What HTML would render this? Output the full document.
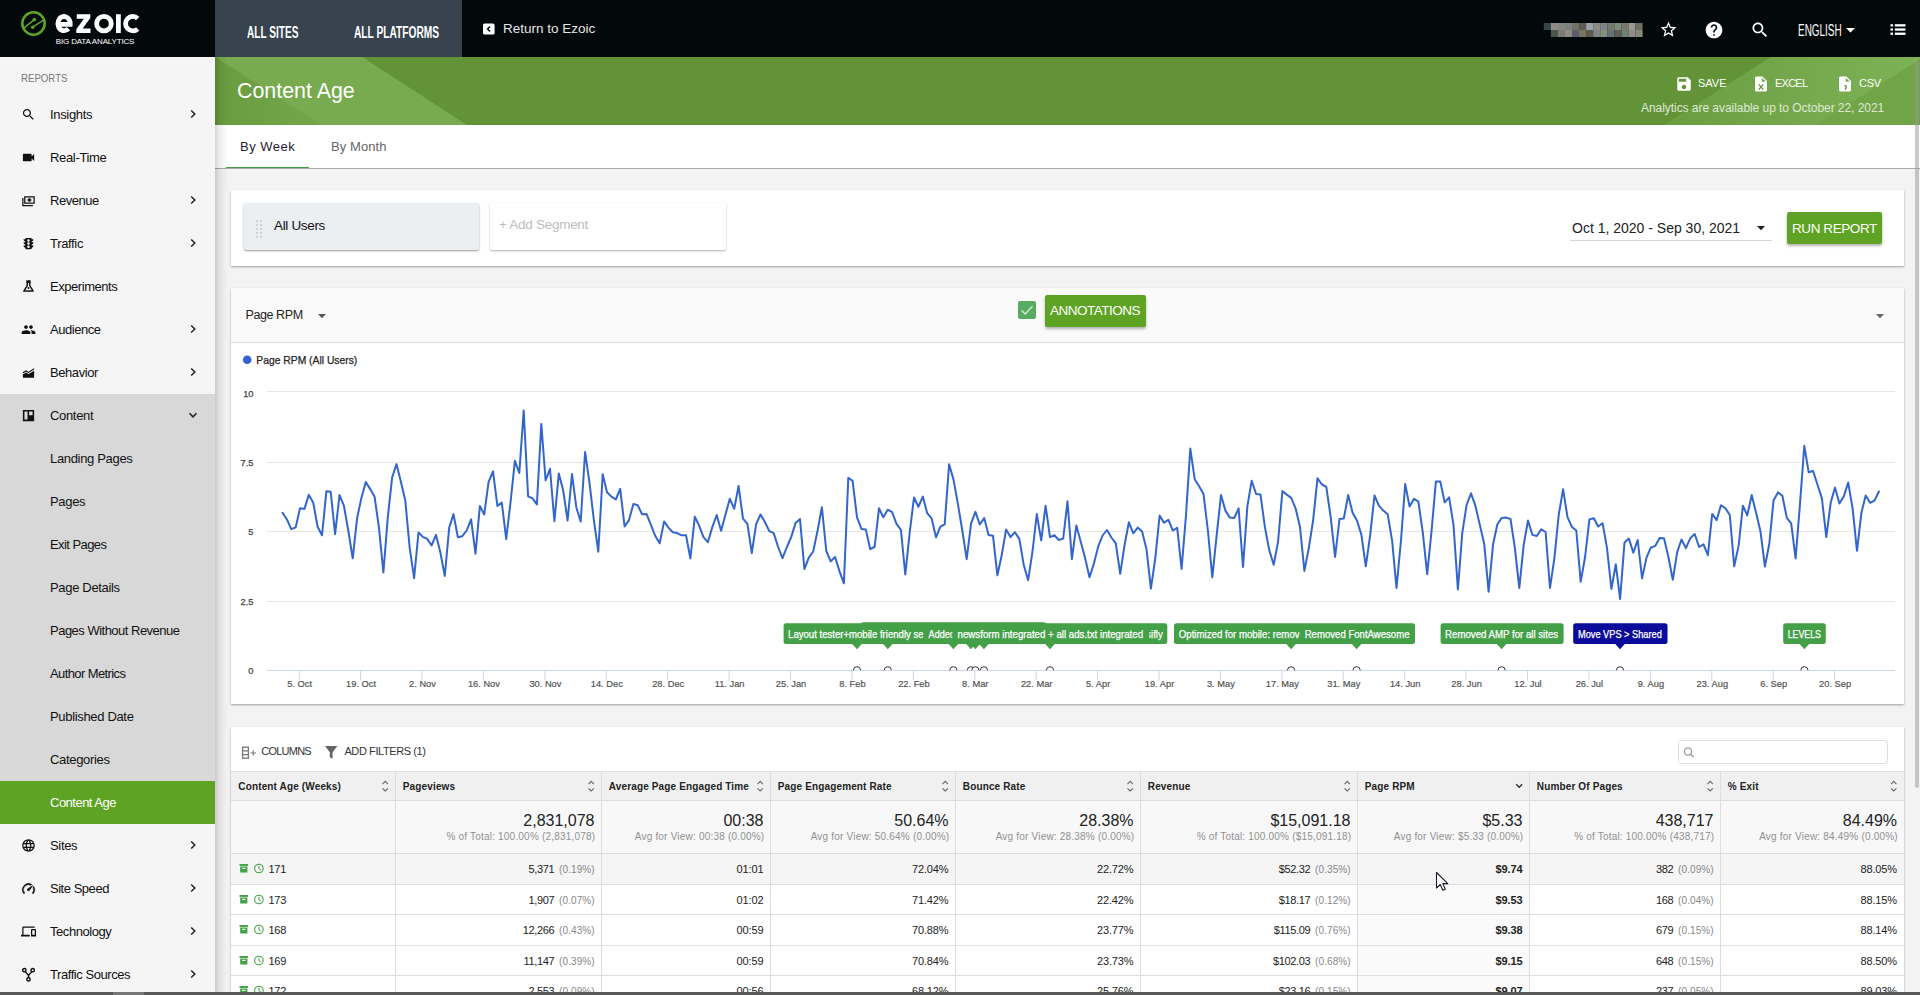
<!DOCTYPE html>
<html>
<head>
<meta charset="utf-8">
<title>Content Age</title>
<style>
*{box-sizing:border-box;margin:0;padding:0}
html,body{width:1920px;height:995px;overflow:hidden;background:#f3f3f3;font-family:"Liberation Sans",sans-serif;color:#222}
.abs{position:absolute}
#topbar{position:absolute;left:0;top:0;width:1920px;height:57px;background:#03080b}
#navtabs{position:absolute;left:215px;top:0;width:247px;height:57px;background:#37444f}
.cond{position:absolute;color:#fff;font-weight:bold;font-size:17px;white-space:nowrap;transform-origin:0 0;line-height:20px}
#sidebar{position:absolute;left:0;top:57px;width:215px;height:938px;background:#f5f5f5}
#sideshadow{position:absolute;left:215px;top:57px;width:14px;height:938px;background:linear-gradient(to right,rgba(0,0,0,.16),rgba(0,0,0,.07) 35%,rgba(0,0,0,.02) 70%,rgba(0,0,0,0))}
.sb{position:absolute;left:0;width:215px;height:43px}
.sb span{position:absolute;left:50px;top:13px;font-size:13px;line-height:17px;color:#111;white-space:nowrap;letter-spacing:-0.33px}
.sb svg.ic{position:absolute;left:21px;top:14px;width:15px;height:15px}
.sb svg.ch{position:absolute;left:188px;top:16px;width:10px;height:10px}
#greenhdr{position:absolute;left:215px;top:57px;width:1705px;height:68px;background:#629437;overflow:hidden}
#tabsbar{position:absolute;left:215px;top:125px;width:1705px;height:44px;background:#fff;border-bottom:1px solid #aaa}
.panel{position:absolute;background:#fff;box-shadow:0 1px 2px rgba(0,0,0,.35)}
.hb{top:19px;font-size:11px;line-height:15px;color:#fff;white-space:nowrap}
</style>
</head>
<body>
<div id="topbar">
<svg class="abs" style="left:0;top:0" width="215" height="57" viewBox="0 0 215 57"><circle cx="33.5" cy="23.5" r="11.2" fill="none" stroke="#5ba525" stroke-width="2.6"/><path d="M24 27.800L34.300 19.600M32.700 27.200L43 20.400" stroke="#5ba525" stroke-width="1.500" fill="none" stroke-linecap="round"/><circle cx="34.300" cy="19.600" r="1.800" fill="#5ba525"/><circle cx="32.700" cy="27.200" r="1.800" fill="#5ba525"/>
<g fill="none" stroke="#fff" stroke-width="4.800"><path d="M59.500 24.300H70.170A6.150 7.100 0 1 0 68.400 28.620"/><circle cx="103.950" cy="23.650" r="7.300"/><path d="M137.700 18.400A7.200 7.200 0 1 0 137.700 28.900"/></g>
<path fill="#fff" d="M76.800 14.300H90.300V18L82.700 28.500H90.500V33H76.300V29.300L83.900 18.800H76.800ZM116 14.300h4.800V33H116z"/></svg>
<div class="abs" id="bda" style="left:55.8px;top:37px;font-size:8px;line-height:10px;color:#fff;white-space:nowrap;letter-spacing:-0.16px">BIG DATA ANALYTICS</div>
</div>
<div id="navtabs"></div>
<div class="cond" id="allsites" style="left:247px;top:23px;font-size:16px;transform:scaleX(.632)">ALL SITES</div>
<div class="cond" id="allplat" style="left:354px;top:23px;font-size:16px;transform:scaleX(.637)">ALL PLATFORMS</div>
<svg class="abs" style="left:483px;top:23px" width="12" height="12" viewBox="0 0 12 12"><rect x="0" y="0.5" width="11.6" height="11" rx="1.6" fill="#fff"/><path d="M7 3.5 L4.6 6 L7 8.5" stroke="#03080b" stroke-width="1.5" fill="none"/></svg>
<div class="abs" id="ret" style="left:503px;top:20px;font-size:13.5px;line-height:17px;color:#e4e4e4;white-space:nowrap">Return to Ezoic</div>
<svg class="abs" style="left:1543px;top:23px" width="100" height="14" viewBox="0 0 100 14"><rect x="0.80" y="0" width="7.150" height="7" fill="#34464a"/><rect x="7.85" y="0" width="7.150" height="7" fill="#8f8c86"/><rect x="7.85" y="7" width="7.150" height="7" fill="#4d5650"/><rect x="14.90" y="0" width="7.150" height="7" fill="#828580"/><rect x="14.90" y="7" width="7.150" height="7" fill="#7d7a74"/><rect x="21.95" y="0" width="7.150" height="7" fill="#7a8280"/><rect x="21.95" y="7" width="7.150" height="7" fill="#8a8d88"/><rect x="29.00" y="0" width="7.150" height="7" fill="#6f7268"/><rect x="29.00" y="7" width="7.150" height="7" fill="#5d5e6c"/><rect x="36.05" y="0" width="7.150" height="7" fill="#5d5a52"/><rect x="36.05" y="7" width="7.150" height="7" fill="#76785f"/><rect x="43.10" y="0" width="7.150" height="7" fill="#98a4a8"/><rect x="43.10" y="7" width="7.150" height="7" fill="#5d5a52"/><rect x="50.15" y="0" width="7.150" height="7" fill="#8a8d84"/><rect x="50.15" y="7" width="7.150" height="7" fill="#7f8688"/><rect x="57.20" y="0" width="7.150" height="7" fill="#7d8484"/><rect x="57.20" y="7" width="7.150" height="7" fill="#84907f"/><rect x="64.25" y="0" width="7.150" height="7" fill="#74766c"/><rect x="64.25" y="7" width="7.150" height="7" fill="#66727a"/><rect x="71.30" y="0" width="7.150" height="7" fill="#7d8a7c"/><rect x="71.30" y="7" width="7.150" height="7" fill="#5f5d55"/><rect x="78.35" y="0" width="7.150" height="7" fill="#77786e"/><rect x="78.35" y="7" width="7.150" height="7" fill="#6d8270"/><rect x="85.40" y="0" width="7.150" height="7" fill="#9a9890"/><rect x="85.40" y="7" width="7.150" height="7" fill="#8e8e88"/><rect x="92.45" y="0" width="7.150" height="7" fill="#6e6e64"/><rect x="92.45" y="7" width="7.150" height="7" fill="#8a877a"/></svg>
<svg class="abs" style="left:1659px;top:20px" width="19" height="19" viewBox="0 0 24 24"><path fill="#fff" d="M22 9.24l-7.19-.62L12 2 9.19 8.630 2 9.240l5.460 4.730L5.820 21 12 17.270 18.180 21l-1.630-7.030L22 9.240zM12 15.400l-3.760 2.270 1-4.280-3.320-2.880 4.380-.38L12 6.100l1.710 4.040 4.380.38-3.320 2.880 1 4.280L12 15.400z"/></svg>
<svg class="abs" style="left:1704px;top:20px" width="20" height="20" viewBox="0 0 24 24"><path fill="#fff" d="M12 2C6.480 2 2 6.480 2 12s4.480 10 10 10 10-4.480 10-10S17.520 2 12 2zm1 17h-2v-2h2v2zm2.070-7.750l-.9.920C13.450 12.900 13 13.500 13 15h-2v-.5c0-1.100.45-2.100 1.170-2.830l1.240-1.260c.37-.36.59-.86.590-1.410 0-1.100-.9-2-2-2s-2 .9-2 2H8c0-2.210 1.790-4 4-4s4 1.790 4 4c0 .88-.36 1.680-.93 2.250z"/></svg>
<svg class="abs" style="left:1750px;top:20px" width="20" height="20" viewBox="0 0 24 24"><path fill="#fff" d="M15.500 14h-.79l-.28-.27C15.410 12.590 16 11.110 16 9.500 16 5.910 13.090 3 9.500 3S3 5.910 3 9.500 5.910 16 9.500 16c1.610 0 3.090-.59 4.230-1.570l.27.28v.79l5 4.990L20.490 19l-4.990-5zm-6 0C7.010 14 5 11.990 5 9.500S7.010 5 9.500 5 14 7.010 14 9.500 11.990 14 9.500 14z"/></svg>
<div class="cond" id="eng" style="left:1797.500px;top:20.500px;font-weight:normal;font-size:16px;transform:scaleX(.622)">ENGLISH</div>
<svg class="abs" style="left:1846px;top:28px" width="9" height="5" viewBox="0 0 9 5"><path d="M0 0h9L4.500 4.500z" fill="#fff"/></svg>
<svg class="abs" style="left:1888px;top:22px" width="20" height="16" viewBox="1888 22 20 16"><g fill="#fff"><rect x="1890.500" y="24.200" width="2.500" height="2.300"/><rect x="1894.800" y="24.200" width="10.700" height="2.300"/><rect x="1890.500" y="28.400" width="2.500" height="2.300"/><rect x="1894.800" y="28.400" width="10.700" height="2.300"/><rect x="1890.500" y="32.600" width="2.500" height="2.300"/><rect x="1894.800" y="32.600" width="10.700" height="2.300"/></g></svg>
<div id="sidebar">
<div class="abs" id="reports" style="left:21px;top:14px;font-size:11px;line-height:14px;color:#777;white-space:nowrap;transform:scaleX(.877);transform-origin:0 0">REPORTS</div>
<div class="abs" style="left:0;top:337px;width:215px;height:387px;background:#d8d8d8"></div>
<div class="abs" style="left:0;top:724px;width:215px;height:43px;background:#5ea323"></div>
<div class="sb" style="top:36px"><svg class="ic" viewBox="0 0 24 24" fill="#111"><path d="M15.500 14h-.79l-.28-.27C15.410 12.590 16 11.110 16 9.500 16 5.910 13.090 3 9.500 3S3 5.910 3 9.500 5.910 16 9.500 16c1.610 0 3.090-.59 4.230-1.570l.27.28v.79l5 4.990L20.490 19l-4.990-5zm-6 0C7.010 14 5 11.990 5 9.500S7.010 5 9.500 5 14 7.010 14 9.500 11.990 14 9.500 14z"/></svg><span>Insights</span><svg class="ch" viewBox="0 0 10 10"><path d="M3.200 1.500L6.800 5 3.200 8.500" fill="none" stroke="#222" stroke-width="1.500"/></svg></div>
<div class="sb" style="top:79px"><svg class="ic" viewBox="0 0 24 24" fill="#111"><path d="M17 10.500V7c0-.55-.45-1-1-1H4c-.55 0-1 .45-1 1v10c0 .55.45 1 1 1h12c.55 0 1-.45 1-1v-3.500l4 4v-11l-4 4z"/></svg><span>Real-Time</span></div>
<div class="sb" style="top:122px"><svg class="ic" viewBox="0 0 24 24" fill="#111"><path d="M5 5h17v12H5z M7 7v8h13V7z" fill-rule="evenodd"/><ellipse cx="13.500" cy="11" rx="3.200" ry="2.800"/><path d="M2 8h2v11h15v2H2z"/></svg><span style="letter-spacing:-0.48px">Revenue</span><svg class="ch" viewBox="0 0 10 10"><path d="M3.200 1.500L6.800 5 3.200 8.500" fill="none" stroke="#222" stroke-width="1.500"/></svg></div>
<div class="sb" style="top:165px"><svg class="ic" viewBox="0 0 24 24" fill="#111"><path d="M20 10h-3V8.860c1.720-.45 3-2 3-3.860h-3V4c0-.55-.45-1-1-1H8c-.55 0-1 .45-1 1v1H4c0 1.860 1.280 3.410 3 3.860V10H4c0 1.860 1.280 3.410 3 3.860V15H4c0 1.860 1.280 3.410 3 3.860V20c0 .55.45 1 1 1h8c.55 0 1-.45 1-1v-1.140c1.720-.45 3-2 3-3.860h-3v-1.140c1.720-.45 3-2 3-3.860zm-8 9c-1.110 0-2-.9-2-2s.89-2 2-2c1.100 0 2 .9 2 2s-.89 2-2 2zm0-5c-1.110 0-2-.9-2-2s.89-2 2-2c1.100 0 2 .9 2 2s-.89 2-2 2zm0-5c-1.110 0-2-.9-2-2 0-1.110.89-2 2-2 1.100 0 2 .89 2 2 0 1.100-.89 2-2 2z"/></svg><span>Traffic</span><svg class="ch" viewBox="0 0 10 10"><path d="M3.200 1.500L6.800 5 3.200 8.500" fill="none" stroke="#222" stroke-width="1.500"/></svg></div>
<div class="sb" style="top:208px"><svg class="ic" viewBox="0 0 24 24" fill="#111"><path d="M8.500 2h7v4.500h-7z"/><path d="M10 6v4.500L4.500 19.300h15L14 10.500V6" fill="none" stroke="#111" stroke-width="2.300" stroke-linejoin="round"/><circle cx="12" cy="14.500" r="1.600"/></svg><span style="letter-spacing:-0.45px">Experiments</span></div>
<div class="sb" style="top:251px"><svg class="ic" viewBox="0 0 24 24" fill="#111"><path d="M16 11c1.660 0 2.990-1.340 2.990-3S17.660 5 16 5c-1.660 0-3 1.340-3 3s1.340 3 3 3zm-8 0c1.660 0 2.990-1.340 2.990-3S9.660 5 8 5C6.340 5 5 6.340 5 8s1.340 3 3 3zm0 2c-2.330 0-7 1.170-7 3.500V19h14v-2.500c0-2.330-4.670-3.500-7-3.500zm8 0c-.29 0-.62.020-.97.050 1.160.84 1.970 1.970 1.970 3.450V19h6v-2.500c0-2.330-4.670-3.500-7-3.500z"/></svg><span style="letter-spacing:-0.47px">Audience</span><svg class="ch" viewBox="0 0 10 10"><path d="M3.200 1.500L6.800 5 3.200 8.500" fill="none" stroke="#222" stroke-width="1.500"/></svg></div>
<div class="sb" style="top:294px"><svg class="ic" viewBox="0 0 24 24" fill="#111"><path d="M3 20.500V15l5-3 4 2.500 9-5.500V20.500z"/><path d="M3 12.500l5-3 4 2.300 9-5.800" fill="none" stroke="#111" stroke-width="1.700"/></svg><span style="letter-spacing:-0.42px">Behavior</span><svg class="ch" viewBox="0 0 10 10"><path d="M3.200 1.500L6.800 5 3.200 8.500" fill="none" stroke="#222" stroke-width="1.500"/></svg></div>
<div class="sb" style="top:337px"><svg class="ic" viewBox="0 0 24 24" fill="#111"><path d="M3 3h18v18H3z M5.500 5.500v13h5v-13z M13 5.500v6h5.500v-6z" fill-rule="evenodd"/></svg><span>Content</span><svg class="ch" viewBox="0 0 10 10"><path d="M1.500 3.200L5 6.800 8.500 3.200" fill="none" stroke="#222" stroke-width="1.500"/></svg></div>
<div class="sb" style="top:380px"><span>Landing Pages</span></div>
<div class="sb" style="top:423px"><span>Pages</span></div>
<div class="sb" style="top:466px"><span style="letter-spacing:-0.57px">Exit Pages</span></div>
<div class="sb" style="top:509px"><span>Page Details</span></div>
<div class="sb" style="top:552px"><span style="letter-spacing:-0.51px">Pages Without Revenue</span></div>
<div class="sb" style="top:595px"><span style="letter-spacing:-0.60px">Author Metrics</span></div>
<div class="sb" style="top:638px"><span>Published Date</span></div>
<div class="sb" style="top:681px"><span>Categories</span></div>
<div class="sb" style="top:724px"><span style="color:#fff;letter-spacing:-0.51px">Content Age</span></div>
<div class="sb" style="top:767px"><svg class="ic" viewBox="0 0 24 24" fill="#111"><path d="M11.990 2C6.470 2 2 6.480 2 12s4.470 10 9.990 10C17.520 22 22 17.520 22 12S17.520 2 11.990 2zm6.930 6h-2.950c-.32-1.250-.78-2.450-1.380-3.560 1.840.63 3.370 1.910 4.330 3.560zM12 4.040c.83 1.200 1.480 2.530 1.910 3.960h-3.820c.43-1.430 1.080-2.760 1.910-3.960zM4.260 14C4.100 13.360 4 12.690 4 12s.1-1.360.26-2h3.380c-.08.66-.14 1.320-.14 2 0 .68.060 1.340.14 2H4.260zm.82 2h2.950c.32 1.250.78 2.450 1.380 3.560-1.840-.63-3.370-1.900-4.330-3.560zm2.950-8H5.080c.96-1.660 2.490-2.930 4.330-3.560C8.810 5.550 8.350 6.750 8.030 8zM12 19.960c-.83-1.200-1.480-2.530-1.910-3.960h3.820c-.43 1.430-1.080 2.760-1.910 3.960zM14.340 14H9.660c-.09-.66-.16-1.320-.16-2 0-.68.070-1.350.16-2h4.680c.09.65.16 1.320.16 2 0 .68-.07 1.340-.16 2zm.25 5.560c.6-1.110 1.060-2.310 1.380-3.560h2.950c-.96 1.650-2.490 2.930-4.330 3.560zM16.360 14c.08-.66.14-1.320.14-2 0-.68-.06-1.340-.14-2h3.380c.16.64.26 1.310.26 2s-.1 1.360-.26 2h-3.380z"/></svg><span>Sites</span><svg class="ch" viewBox="0 0 10 10"><path d="M3.200 1.500L6.800 5 3.200 8.500" fill="none" stroke="#222" stroke-width="1.500"/></svg></div>
<div class="sb" style="top:810px"><svg class="ic" viewBox="0 0 24 24" fill="#111" stroke="#111" stroke-width="0.700"><path d="M20.380 8.570l-1.230 1.850a8 8 0 0 1-.22 7.580H5.070A8 8 0 0 1 15.580 6.850l1.850-1.230A10 10 0 0 0 3.350 19a2 2 0 0 0 1.720 1h13.850a2 2 0 0 0 1.740-1 10 10 0 0 0-.27-10.440zm-9.790 6.840a2 2 0 0 0 2.830 0l5.660-8.490-8.490 5.660a2 2 0 0 0 0 2.830z"/><path d="M6.500 16.500h11v4.500h-11z" fill="#f5f5f5" stroke="#f5f5f5"/></svg><span style="letter-spacing:-0.47px">Site Speed</span><svg class="ch" viewBox="0 0 10 10"><path d="M3.200 1.500L6.800 5 3.200 8.500" fill="none" stroke="#222" stroke-width="1.500"/></svg></div>
<div class="sb" style="top:853px"><svg class="ic" viewBox="0 0 24 24" fill="#111"><path d="M4 6h18V4H4c-1.100 0-2 .9-2 2v11H0v3h14v-3H4V6zm19 2h-6c-.55 0-1 .45-1 1v10c0 .55.45 1 1 1h6c.55 0 1-.45 1-1V9c0-.55-.45-1-1-1zm-1 9h-4v-7h4v7z"/></svg><span style="letter-spacing:-0.45px">Technology</span><svg class="ch" viewBox="0 0 10 10"><path d="M3.200 1.500L6.800 5 3.200 8.500" fill="none" stroke="#222" stroke-width="1.500"/></svg></div>
<div class="sb" style="top:896px"><svg class="ic" viewBox="0 0 24 24" fill="#111"><g fill="none" stroke="#111" stroke-width="2.300"><circle cx="5.300" cy="5" r="2.700"/><circle cx="18.700" cy="5" r="2.700"/><circle cx="12" cy="19.800" r="2.700"/><path d="M6.800 7.400L12 13.500l5.200-6.100M12 13.500v3.600"/></g></svg><span style="letter-spacing:-0.44px">Traffic Sources</span><svg class="ch" viewBox="0 0 10 10"><path d="M3.200 1.500L6.800 5 3.200 8.500" fill="none" stroke="#222" stroke-width="1.500"/></svg></div>
</div>
<div id="greenhdr">
<svg class="abs" style="left:0;top:0" width="1705" height="68" viewBox="0 0 1705 68"><defs><linearGradient id="lg1" gradientUnits="userSpaceOnUse" x1="1448" y1="0" x2="1705" y2="0"><stop offset="0" stop-color="#6a9d40"/><stop offset="1" stop-color="#7eb256"/></linearGradient><linearGradient id="lg2" gradientUnits="userSpaceOnUse" x1="0" y1="0" x2="110" y2="0"><stop offset="0" stop-color="#699b3f"/><stop offset="1" stop-color="#74a64a"/></linearGradient></defs>
<path d="M0 0H147L252 68H0Z" fill="#78ab4f"/><path d="M0 0L107 68H0Z" fill="url(#lg2)"/>
<path d="M1556 0H1705V68H1449Z" fill="url(#lg1)"/><path d="M1707 1V68H1601Z" fill="#70a446"/></svg>
<div class="abs" id="ttl" style="left:22px;top:21.300px;font-size:21.4px;line-height:26px;color:#fff;white-space:nowrap">Content Age</div>
<svg class="abs" style="left:1460px;top:18px" width="18" height="18" viewBox="0 0 24 24"><path fill="#fff" d="M17 3H5c-1.110 0-2 .9-2 2v14c0 1.100.89 2 2 2h14c1.100 0 2-.9 2-2V7l-4-4zm-5 16c-1.660 0-3-1.340-3-3s1.340-3 3-3 3 1.340 3 3-1.340 3-3 3zm3-10H5V5h10v4z"/></svg>
<div class="abs hb" id="hsave" style="left:1483px">SAVE</div>
<svg class="abs" style="left:1537px;top:18px" width="18" height="18" viewBox="0 0 24 24"><path fill="#fff" d="M14 2H6c-1.100 0-2 .9-2 2v16c0 1.100.9 2 2 2h12c1.100 0 2-.9 2-2V8l-6-6zm-1 7V3.500L18.500 9H13z"/><path d="M9 12.500l6 7M15 12.500l-6 7" stroke="#629437" stroke-width="1.800"/></svg>
<div class="abs hb" id="hexcel" style="left:1560px;letter-spacing:-0.75px">EXCEL</div>
<svg class="abs" style="left:1621px;top:18px" width="18" height="18" viewBox="0 0 24 24"><path fill="#fff" d="M14 2H6c-1.100 0-2 .9-2 2v16c0 1.100.9 2 2 2h12c1.100 0 2-.9 2-2V8l-6-6zm-1 7V3.500L18.500 9H13z"/><path d="M11 14.500h2.500v2.500l-1.500 2.500" stroke="#629437" stroke-width="1.800" fill="none"/></svg>
<div class="abs hb" id="hcsv" style="left:1644px;letter-spacing:-0.3px">CSV</div>
<div class="abs" id="avail" style="left:1426px;top:44px;font-size:12px;line-height:15px;color:#dfe9d5;white-space:nowrap;letter-spacing:-0.05px">Analytics are available up to October 22, 2021</div>
</div>
<div id="tabsbar">
<div class="abs" id="byweek" style="left:25px;top:13px;font-size:13px;line-height:17px;color:#223;white-space:nowrap;letter-spacing:.5px">By Week</div>
<div class="abs" id="bymonth" style="left:116px;top:13px;font-size:13px;line-height:17px;color:#666;white-space:nowrap;letter-spacing:.08px">By Month</div>
<div class="abs" style="left:11px;top:41.500px;width:83px;height:1.500px;background:#43a047"></div>
</div>
<div class="panel" id="segpanel" style="left:231px;top:190px;width:1673px;height:76px">
<div class="abs" style="left:12.700px;top:13px;width:235.500px;height:47px;background:#eceff2;box-shadow:0 1px 2px rgba(0,0,0,.4);border-radius:2px"></div>
<svg class="abs" style="left:24px;top:29px" width="10" height="20" viewBox="255 219 10 20"><g fill="#c6c9cd"><rect x="256.2" y="220.2" width="1.800" height="1.800"/><rect x="260.2" y="220.2" width="1.800" height="1.800"/><rect x="256.2" y="224.1" width="1.800" height="1.800"/><rect x="260.2" y="224.1" width="1.800" height="1.800"/><rect x="256.2" y="228.0" width="1.800" height="1.800"/><rect x="260.2" y="228.0" width="1.800" height="1.800"/><rect x="256.2" y="231.9" width="1.800" height="1.800"/><rect x="260.2" y="231.9" width="1.800" height="1.800"/><rect x="256.2" y="235.8" width="1.800" height="1.800"/><rect x="260.2" y="235.8" width="1.800" height="1.800"/></g></svg>
<div class="abs" id="allusers" style="left:43px;top:27px;font-size:13.5px;line-height:17px;color:#111;white-space:nowrap;letter-spacing:-0.34px">All Users</div>
<div class="abs" style="left:259px;top:13px;width:236px;height:47px;background:#fff;box-shadow:0 1px 2px rgba(0,0,0,.3);border-radius:2px"></div>
<div class="abs" id="addseg" style="left:268px;top:26px;font-size:13.5px;line-height:17px;color:#bdbdbd;white-space:nowrap;letter-spacing:-0.28px">+ Add Segment</div>
<div class="abs" id="datetxt" style="left:1341px;top:30px;font-size:14px;line-height:17px;color:#222;white-space:nowrap">Oct 1, 2020 - Sep 30, 2021</div>
<svg class="abs" style="left:1526px;top:36px" width="8" height="5" viewBox="0 0 8 5"><path d="M0 0h8L4 4.300z" fill="#222"/></svg>
<div class="abs" style="left:1339px;top:50px;width:202px;height:1px;background:#d8d8d8"></div>
<div class="abs" style="left:1555.5px;top:21.5px;width:95.500px;height:32px;background:#5ea323;border-radius:2px;box-shadow:0 2px 3px rgba(0,0,0,.3)"></div>
<div class="abs" id="runrep" style="left:1561px;top:29.500px;font-size:13.500px;line-height:17px;color:#fff;white-space:nowrap;letter-spacing:-0.42px">RUN REPORT</div>
</div>
<div class="panel" id="chartpanel" style="left:231px;top:288px;width:1673px;height:416px">
<div class="abs" style="left:0;top:0;width:1673px;height:55px;background:#fafafa;border-bottom:1px solid #ddd"></div>
<div class="abs" id="pagerpm" style="left:14.500px;top:19px;font-size:12.500px;line-height:16px;color:#222;white-space:nowrap;letter-spacing:-0.41px">Page RPM</div>
<svg class="abs" style="left:87px;top:25.500px" width="8" height="5" viewBox="0 0 8 5"><path d="M0 0h8L4 4.200z" fill="#555"/></svg>
<svg class="abs" style="left:1645px;top:26px" width="8" height="5" viewBox="0 0 8 5"><path d="M0 0h8L4 4.200z" fill="#666"/></svg>
<div class="abs" style="left:787px;top:13px;width:18px;height:18px;background:#5aab62;border-radius:2px"></div>
<svg class="abs" style="left:787px;top:13px" width="18" height="18" viewBox="0 0 18 18"><path d="M3.500 9.300L7.200 13 14.500 5.200" fill="none" stroke="#d4ead5" stroke-width="1.300"/></svg>
<div class="abs" style="left:814px;top:6.800px;width:100.600px;height:32.100px;background:#5ea323;border-radius:2px;box-shadow:0 2px 3px rgba(0,0,0,.3)"></div>
<div class="abs" id="annot" style="left:819px;top:13.800px;font-size:13.500px;line-height:17px;color:#fff;white-space:nowrap;letter-spacing:-0.5px">ANNOTATIONS</div>
<!--CHART_START--><svg class="abs" style="left:0;top:55px" width="1673" height="361" viewBox="231 343 1673 361" font-family="Liberation Sans, sans-serif">
<circle cx="247.2" cy="359.7" r="4.3" fill="#3063d0"/>
<text x="256.3" y="363.9" font-size="11" fill="#222" stroke="#222" stroke-width="0.25" textLength="101" lengthAdjust="spacingAndGlyphs">Page RPM (All Users)</text>
<path d="M267 391.50H1895" stroke="#e6e6e6" stroke-width="1"/>
<text x="253.5" y="396.8" font-size="9.3" fill="#444" text-anchor="end" stroke="#444" stroke-width="0.25">10</text>
<path d="M267 462.50H1895" stroke="#e6e6e6" stroke-width="1"/>
<text x="253.5" y="465.8" font-size="9.3" fill="#444" text-anchor="end" stroke="#444" stroke-width="0.25">7.5</text>
<path d="M267 531.50H1895" stroke="#e6e6e6" stroke-width="1"/>
<text x="253.5" y="534.8" font-size="9.3" fill="#444" text-anchor="end" stroke="#444" stroke-width="0.25">5</text>
<path d="M267 601.50H1895" stroke="#e6e6e6" stroke-width="1"/>
<text x="253.5" y="604.8" font-size="9.3" fill="#444" text-anchor="end" stroke="#444" stroke-width="0.25">2.5</text>
<path d="M267 670.50H1895" stroke="#ccd6eb" stroke-width="1"/>
<text x="253.5" y="673.8" font-size="9.3" fill="#444" text-anchor="end" stroke="#444" stroke-width="0.25">0</text>
<path d="M299.2 670.5V680.5" stroke="#ccd6eb" stroke-width="1"/>
<text x="299.7" y="687.2" font-size="9.3" fill="#555" text-anchor="middle" stroke="#555" stroke-width="0.2">5. Oct</text>
<path d="M360.6 670.5V680.5" stroke="#ccd6eb" stroke-width="1"/>
<text x="361.1" y="687.2" font-size="9.3" fill="#555" text-anchor="middle" stroke="#555" stroke-width="0.2">19. Oct</text>
<path d="M422.0 670.5V680.5" stroke="#ccd6eb" stroke-width="1"/>
<text x="422.5" y="687.2" font-size="9.3" fill="#555" text-anchor="middle" stroke="#555" stroke-width="0.2">2. Nov</text>
<path d="M483.4 670.5V680.5" stroke="#ccd6eb" stroke-width="1"/>
<text x="483.9" y="687.2" font-size="9.3" fill="#555" text-anchor="middle" stroke="#555" stroke-width="0.2">16. Nov</text>
<path d="M544.9 670.5V680.5" stroke="#ccd6eb" stroke-width="1"/>
<text x="545.4" y="687.2" font-size="9.3" fill="#555" text-anchor="middle" stroke="#555" stroke-width="0.2">30. Nov</text>
<path d="M606.3 670.5V680.5" stroke="#ccd6eb" stroke-width="1"/>
<text x="606.8" y="687.2" font-size="9.3" fill="#555" text-anchor="middle" stroke="#555" stroke-width="0.2">14. Dec</text>
<path d="M667.7 670.5V680.5" stroke="#ccd6eb" stroke-width="1"/>
<text x="668.2" y="687.2" font-size="9.3" fill="#555" text-anchor="middle" stroke="#555" stroke-width="0.2">28. Dec</text>
<path d="M729.1 670.5V680.5" stroke="#ccd6eb" stroke-width="1"/>
<text x="729.6" y="687.2" font-size="9.3" fill="#555" text-anchor="middle" stroke="#555" stroke-width="0.2">11. Jan</text>
<path d="M790.5 670.5V680.5" stroke="#ccd6eb" stroke-width="1"/>
<text x="791.0" y="687.2" font-size="9.3" fill="#555" text-anchor="middle" stroke="#555" stroke-width="0.2">25. Jan</text>
<path d="M851.9 670.5V680.5" stroke="#ccd6eb" stroke-width="1"/>
<text x="852.4" y="687.2" font-size="9.3" fill="#555" text-anchor="middle" stroke="#555" stroke-width="0.2">8. Feb</text>
<path d="M913.4 670.5V680.5" stroke="#ccd6eb" stroke-width="1"/>
<text x="913.9" y="687.2" font-size="9.3" fill="#555" text-anchor="middle" stroke="#555" stroke-width="0.2">22. Feb</text>
<path d="M974.8 670.5V680.5" stroke="#ccd6eb" stroke-width="1"/>
<text x="975.3" y="687.2" font-size="9.3" fill="#555" text-anchor="middle" stroke="#555" stroke-width="0.2">8. Mar</text>
<path d="M1036.2 670.5V680.5" stroke="#ccd6eb" stroke-width="1"/>
<text x="1036.7" y="687.2" font-size="9.3" fill="#555" text-anchor="middle" stroke="#555" stroke-width="0.2">22. Mar</text>
<path d="M1097.6 670.5V680.5" stroke="#ccd6eb" stroke-width="1"/>
<text x="1098.1" y="687.2" font-size="9.3" fill="#555" text-anchor="middle" stroke="#555" stroke-width="0.2">5. Apr</text>
<path d="M1159.0 670.5V680.5" stroke="#ccd6eb" stroke-width="1"/>
<text x="1159.5" y="687.2" font-size="9.3" fill="#555" text-anchor="middle" stroke="#555" stroke-width="0.2">19. Apr</text>
<path d="M1220.4 670.5V680.5" stroke="#ccd6eb" stroke-width="1"/>
<text x="1220.9" y="687.2" font-size="9.3" fill="#555" text-anchor="middle" stroke="#555" stroke-width="0.2">3. May</text>
<path d="M1281.9 670.5V680.5" stroke="#ccd6eb" stroke-width="1"/>
<text x="1282.4" y="687.2" font-size="9.3" fill="#555" text-anchor="middle" stroke="#555" stroke-width="0.2">17. May</text>
<path d="M1343.3 670.5V680.5" stroke="#ccd6eb" stroke-width="1"/>
<text x="1343.8" y="687.2" font-size="9.3" fill="#555" text-anchor="middle" stroke="#555" stroke-width="0.2">31. May</text>
<path d="M1404.7 670.5V680.5" stroke="#ccd6eb" stroke-width="1"/>
<text x="1405.2" y="687.2" font-size="9.3" fill="#555" text-anchor="middle" stroke="#555" stroke-width="0.2">14. Jun</text>
<path d="M1466.1 670.5V680.5" stroke="#ccd6eb" stroke-width="1"/>
<text x="1466.6" y="687.2" font-size="9.3" fill="#555" text-anchor="middle" stroke="#555" stroke-width="0.2">28. Jun</text>
<path d="M1527.5 670.5V680.5" stroke="#ccd6eb" stroke-width="1"/>
<text x="1528.0" y="687.2" font-size="9.3" fill="#555" text-anchor="middle" stroke="#555" stroke-width="0.2">12. Jul</text>
<path d="M1588.9 670.5V680.5" stroke="#ccd6eb" stroke-width="1"/>
<text x="1589.4" y="687.2" font-size="9.3" fill="#555" text-anchor="middle" stroke="#555" stroke-width="0.2">26. Jul</text>
<path d="M1650.4 670.5V680.5" stroke="#ccd6eb" stroke-width="1"/>
<text x="1650.9" y="687.2" font-size="9.3" fill="#555" text-anchor="middle" stroke="#555" stroke-width="0.2">9. Aug</text>
<path d="M1711.8 670.5V680.5" stroke="#ccd6eb" stroke-width="1"/>
<text x="1712.3" y="687.2" font-size="9.3" fill="#555" text-anchor="middle" stroke="#555" stroke-width="0.2">23. Aug</text>
<path d="M1773.2 670.5V680.5" stroke="#ccd6eb" stroke-width="1"/>
<text x="1773.7" y="687.2" font-size="9.3" fill="#555" text-anchor="middle" stroke="#555" stroke-width="0.2">6. Sep</text>
<path d="M1834.6 670.5V680.5" stroke="#ccd6eb" stroke-width="1"/>
<text x="1835.1" y="687.2" font-size="9.3" fill="#555" text-anchor="middle" stroke="#555" stroke-width="0.2">20. Sep</text>
<path d="M282.5 512.8 L286.9 519.4 L291.3 529.1 L295.7 527.4 L300.0 508.3 L304.4 509.0 L308.8 494.9 L313.2 502.4 L317.6 526.7 L322.0 535.3 L326.4 491.3 L330.7 491.8 L335.1 534.2 L339.5 495.1 L343.9 505.7 L348.3 530.5 L352.7 558.3 L357.1 518.3 L361.4 497.9 L365.8 482.0 L370.2 489.1 L374.6 496.8 L379.0 528.2 L383.4 572.5 L387.8 517.2 L392.1 477.8 L396.5 464.1 L400.9 481.8 L405.3 500.6 L409.7 548.1 L414.1 578.2 L418.5 532.4 L422.8 536.9 L427.2 538.9 L431.6 545.5 L436.0 534.9 L440.4 552.6 L444.8 576.0 L449.2 527.6 L453.5 514.1 L457.9 537.3 L462.3 536.2 L466.7 530.5 L471.1 519.4 L475.5 553.7 L479.9 505.9 L484.2 514.5 L488.6 481.8 L493.0 471.4 L497.4 505.9 L501.8 502.6 L506.2 539.1 L510.6 501.7 L514.9 460.8 L519.3 473.0 L523.7 410.6 L528.1 496.4 L532.5 498.4 L536.9 504.4 L541.3 423.9 L545.6 480.3 L550.0 468.8 L554.4 521.2 L558.8 473.4 L563.2 490.6 L567.6 520.5 L572.0 474.1 L576.3 507.2 L580.7 521.6 L585.1 452.0 L589.5 482.9 L593.9 520.5 L598.3 551.7 L602.7 474.3 L607.0 492.2 L611.4 496.6 L615.8 499.5 L620.2 488.9 L624.6 526.5 L629.0 520.1 L633.4 503.9 L637.7 505.2 L642.1 514.3 L646.5 513.9 L650.9 524.9 L655.3 536.0 L659.7 543.3 L664.1 521.4 L668.4 527.6 L672.8 532.2 L677.2 533.1 L681.6 535.3 L686.0 535.3 L690.4 558.5 L694.8 516.7 L699.1 525.6 L703.5 537.1 L707.9 542.2 L712.3 527.1 L716.7 515.0 L721.1 530.7 L725.5 514.5 L729.8 498.8 L734.2 508.8 L738.6 486.0 L743.0 518.7 L747.4 523.8 L751.8 553.0 L756.2 523.8 L760.5 514.5 L764.9 522.0 L769.3 531.1 L773.7 533.1 L778.1 547.0 L782.5 558.1 L786.9 547.0 L791.2 537.1 L795.6 522.9 L800.0 519.0 L804.4 569.1 L808.8 557.6 L813.2 551.5 L817.6 530.5 L821.9 507.2 L826.3 551.0 L830.7 561.4 L835.1 557.0 L839.5 571.4 L843.9 583.3 L848.3 477.8 L852.6 480.9 L857.0 517.2 L861.4 528.9 L865.8 529.4 L870.2 549.2 L874.6 547.0 L879.0 508.3 L883.3 517.2 L887.7 509.7 L892.1 512.1 L896.5 523.8 L900.9 529.8 L905.3 574.5 L909.7 532.7 L914.0 497.5 L918.4 506.8 L922.8 496.6 L927.2 513.2 L931.6 518.3 L936.0 537.3 L940.4 526.7 L944.7 524.3 L949.1 464.3 L953.5 479.6 L957.9 503.9 L962.3 530.5 L966.7 559.2 L971.1 523.4 L975.4 511.9 L979.8 524.5 L984.2 518.1 L988.6 534.9 L993.0 535.8 L997.4 575.3 L1001.8 554.8 L1006.1 529.4 L1010.5 537.1 L1014.9 532.2 L1019.3 538.9 L1023.7 564.7 L1028.1 580.2 L1032.5 551.5 L1036.8 514.1 L1041.2 540.4 L1045.6 505.7 L1050.0 537.1 L1054.4 535.3 L1058.8 540.0 L1063.2 538.6 L1067.5 501.3 L1071.9 559.2 L1076.3 525.6 L1080.7 541.5 L1085.1 558.1 L1089.5 577.3 L1093.9 563.6 L1098.2 546.4 L1102.6 535.5 L1107.0 530.0 L1111.4 537.5 L1115.8 543.3 L1120.2 573.8 L1124.6 544.8 L1128.9 522.3 L1133.3 533.3 L1137.7 527.6 L1142.1 531.6 L1146.5 549.2 L1150.9 588.6 L1155.3 558.1 L1159.6 515.6 L1164.0 522.7 L1168.4 519.8 L1172.8 530.5 L1177.2 527.8 L1181.6 568.9 L1186.0 515.0 L1190.3 448.6 L1194.7 479.2 L1199.1 486.2 L1203.5 494.0 L1207.9 530.5 L1212.3 577.3 L1216.7 534.9 L1221.0 495.1 L1225.4 510.6 L1229.8 517.6 L1234.2 518.1 L1238.6 508.3 L1243.0 566.9 L1247.4 506.1 L1251.7 480.7 L1256.1 494.0 L1260.5 494.6 L1264.9 527.1 L1269.3 550.4 L1273.7 564.7 L1278.1 541.5 L1282.4 491.1 L1286.8 494.6 L1291.2 497.9 L1295.6 508.3 L1300.0 527.1 L1304.4 570.9 L1308.8 548.1 L1313.1 520.5 L1317.5 478.3 L1321.9 484.5 L1326.3 486.9 L1330.7 517.2 L1335.1 557.0 L1339.5 519.0 L1343.8 518.5 L1348.2 495.1 L1352.6 512.8 L1357.0 520.5 L1361.4 534.9 L1365.8 566.3 L1370.2 534.9 L1374.5 495.5 L1378.9 505.7 L1383.3 510.6 L1387.7 514.3 L1392.1 540.4 L1396.5 587.9 L1400.9 541.5 L1405.2 484.0 L1409.6 506.6 L1414.0 498.8 L1418.4 501.7 L1422.8 532.7 L1427.2 574.2 L1431.6 530.5 L1435.9 481.4 L1440.3 481.6 L1444.7 502.4 L1449.1 497.3 L1453.5 524.9 L1457.9 589.5 L1462.3 532.7 L1466.6 505.0 L1471.0 493.3 L1475.4 505.7 L1479.8 524.9 L1484.2 543.7 L1488.6 591.7 L1493.0 544.8 L1497.3 524.5 L1501.7 517.9 L1506.1 517.6 L1510.5 519.0 L1514.9 548.1 L1519.3 587.9 L1523.7 544.8 L1528.0 520.5 L1532.4 534.9 L1536.8 536.0 L1541.2 529.4 L1545.6 532.0 L1550.0 587.9 L1554.4 558.1 L1558.7 515.0 L1563.1 489.3 L1567.5 517.2 L1571.9 526.9 L1576.3 530.5 L1580.7 581.8 L1585.1 557.0 L1589.4 519.4 L1593.8 518.3 L1598.2 526.5 L1602.6 523.2 L1607.0 548.1 L1611.4 589.0 L1615.8 564.3 L1620.1 599.0 L1624.5 542.6 L1628.9 538.6 L1633.3 552.6 L1637.7 540.0 L1642.1 578.4 L1646.5 557.6 L1650.8 547.7 L1655.2 545.9 L1659.6 538.0 L1664.0 538.2 L1668.4 557.0 L1672.8 579.8 L1677.2 552.1 L1681.5 539.5 L1685.9 548.1 L1690.3 538.2 L1694.7 534.0 L1699.1 547.0 L1703.5 544.4 L1707.9 555.2 L1712.2 513.9 L1716.6 520.1 L1721.0 505.2 L1725.4 508.3 L1729.8 515.0 L1734.2 566.3 L1738.6 545.9 L1742.9 505.7 L1747.3 515.4 L1751.7 495.1 L1756.1 512.8 L1760.5 531.6 L1764.9 566.5 L1769.3 543.7 L1773.6 500.2 L1778.0 492.4 L1782.4 495.7 L1786.8 517.9 L1791.2 523.4 L1795.6 558.5 L1800.0 503.9 L1804.3 445.8 L1808.7 472.3 L1813.1 471.0 L1817.5 484.7 L1821.9 498.4 L1826.3 537.1 L1830.7 502.8 L1835.0 487.6 L1839.4 503.5 L1843.8 496.4 L1848.2 482.5 L1852.6 508.3 L1857.0 550.8 L1861.4 512.8 L1865.7 495.5 L1870.1 502.8 L1874.5 500.6 L1878.9 491.5" fill="none" stroke="#3366cc" stroke-width="2" stroke-linejoin="round" stroke-linecap="round"/>
<path d="M853.4 670.3a3.6 3.6 0 0 1 7.2 0" fill="#fff" stroke="#333" stroke-width="1"/>
<path d="M884.2 670.3a3.6 3.6 0 0 1 7.2 0" fill="#fff" stroke="#333" stroke-width="1"/>
<path d="M949.8 670.3a3.6 3.6 0 0 1 7.2 0" fill="#fff" stroke="#333" stroke-width="1"/>
<path d="M967.3 670.3a3.6 3.6 0 0 1 7.2 0" fill="#fff" stroke="#333" stroke-width="1"/>
<path d="M971.8 670.3a3.6 3.6 0 0 1 7.2 0" fill="#fff" stroke="#333" stroke-width="1"/>
<path d="M980.3 670.3a3.6 3.6 0 0 1 7.2 0" fill="#fff" stroke="#333" stroke-width="1"/>
<path d="M1046.4 670.3a3.6 3.6 0 0 1 7.2 0" fill="#fff" stroke="#333" stroke-width="1"/>
<path d="M1287.5 670.3a3.6 3.6 0 0 1 7.2 0" fill="#fff" stroke="#333" stroke-width="1"/>
<path d="M1353.0 670.3a3.6 3.6 0 0 1 7.2 0" fill="#fff" stroke="#333" stroke-width="1"/>
<path d="M1498.0 670.3a3.6 3.6 0 0 1 7.2 0" fill="#fff" stroke="#333" stroke-width="1"/>
<path d="M1616.4 670.3a3.6 3.6 0 0 1 7.2 0" fill="#fff" stroke="#333" stroke-width="1"/>
<path d="M1800.8 670.3a3.6 3.6 0 0 1 7.2 0" fill="#fff" stroke="#333" stroke-width="1"/>
<rect x="783.6" y="623.3" width="146.4" height="20.8" rx="2.5" fill="#43a047"/>
<rect x="860.6" y="622.3" width="185.8" height="21.8" rx="2.5" fill="#43a047"/>
<rect x="900.0" y="623.3" width="267.3" height="20.8" rx="2.5" fill="#43a047"/>
<path d="M851.8 643.5L857.0 649.3L862.2 643.5z" fill="#43a047"/>
<path d="M882.6 643.5L887.8 649.3L893.0 643.5z" fill="#43a047"/>
<path d="M948.2 643.5L953.4 649.3L958.6 643.5z" fill="#43a047"/>
<path d="M965.7 643.5L970.9 649.3L976.1 643.5z" fill="#43a047"/>
<path d="M970.2 643.5L975.4 649.3L980.6 643.5z" fill="#43a047"/>
<path d="M978.7 643.5L983.9 649.3L989.1 643.5z" fill="#43a047"/>
<path d="M1044.8 643.5L1050.0 649.3L1055.2 643.5z" fill="#43a047"/>
<clipPath id="c1"><rect x="783" y="620" width="140.4" height="30"/></clipPath>
<g clip-path="url(#c1)"><text x="788.1" y="637.7" font-size="10" fill="#fff" stroke="#fff" stroke-width="0.25" textLength="135.5" lengthAdjust="spacingAndGlyphs">Layout tester+mobile friendly se</text></g>
<clipPath id="c2"><rect x="925" y="620" width="27.400" height="30"/></clipPath>
<g clip-path="url(#c2)"><text x="928.6" y="637.7" font-size="10" fill="#fff" stroke="#fff" stroke-width="0.25" textLength="26.2" lengthAdjust="spacingAndGlyphs">Added</text></g>
<text x="957.6" y="637.7" font-size="10" fill="#fff" stroke="#fff" stroke-width="0.25" textLength="185.5" lengthAdjust="spacingAndGlyphs">newsform integrated + all ads.txt integrated</text>
<clipPath id="c3"><rect x="1149.200" y="620" width="20" height="30"/></clipPath>
<g clip-path="url(#c3)"><text x="1146.2" y="637.7" font-size="10" fill="#fff" stroke="#fff" stroke-width="0.25" textLength="16.6" lengthAdjust="spacingAndGlyphs">sifly</text></g>
<rect x="1174.0" y="623.3" width="241.0" height="20.8" rx="2.5" fill="#43a047"/>
<path d="M1285.9 643.5L1291.1 649.3L1296.3 643.5z" fill="#43a047"/>
<path d="M1351.4 643.5L1356.6 649.3L1361.8 643.5z" fill="#43a047"/>
<clipPath id="c4"><rect x="1174" y="620" width="125.500" height="30"/></clipPath>
<g clip-path="url(#c4)"><text x="1178.8" y="637.7" font-size="10" fill="#fff" stroke="#fff" stroke-width="0.25" textLength="120.8" lengthAdjust="spacingAndGlyphs">Optimized for mobile: remov</text></g>
<text x="1304.7" y="637.7" font-size="10" fill="#fff" stroke="#fff" stroke-width="0.25" textLength="104.8" lengthAdjust="spacingAndGlyphs">Removed FontAwesome</text>
<rect x="1440.6" y="623.3" width="123.0" height="20.8" rx="2.5" fill="#43a047"/>
<path d="M1496.4 643.5L1501.6 649.3L1506.8 643.5z" fill="#43a047"/>
<text x="1445.1" y="637.7" font-size="10" fill="#fff" stroke="#fff" stroke-width="0.25" textLength="113.0" lengthAdjust="spacingAndGlyphs">Removed AMP for all sites</text>
<rect x="1573.2" y="623.3" width="94.3" height="20.8" rx="2.5" fill="#0a0a9b"/>
<path d="M1614.8 643.5L1620.0 649.3L1625.2 643.5z" fill="#0a0a9b"/>
<text x="1578.0" y="637.7" font-size="10" fill="#fff" stroke="#fff" stroke-width="0.25" textLength="83.8" lengthAdjust="spacingAndGlyphs">Move VPS &gt; Shared</text>
<rect x="1783.2" y="623.3" width="42.6" height="20.8" rx="2.5" fill="#43a047"/>
<path d="M1799.2 643.5L1804.4 649.3L1809.6 643.5z" fill="#43a047"/>
<text x="1787.7" y="637.7" font-size="10" fill="#fff" stroke="#fff" stroke-width="0.25" textLength="33.3" lengthAdjust="spacingAndGlyphs">LEVELS</text>
</svg><!--CHART_END-->
</div>
<!--TABLE_START--><div class="panel" id="tablepanel" style="left:231px;top:727px;width:1673px;height:300px">
<svg class="abs" style="left:0;top:0" width="1673" height="268" viewBox="231 727 1673 268" font-family="Liberation Sans, sans-serif">
<g fill="none" stroke="#777" stroke-width="1.300"><rect x="242.600" y="747.200" width="5.800" height="11"/><path d="M242.600 750.900h5.800M242.600 754.600h5.800"/><path d="M250.500 753h5.500M253.250 750.200v5.600" stroke-width="1.100"/></g>
<text x="261.300" y="755.200" font-size="11" fill="#333" textLength="50.400" lengthAdjust="spacing">COLUMNS</text>
<path d="M325 746h12.400l-4.800 6.200v6.500l-2.800-1.500v-5z" fill="#666"/>
<text x="344.400" y="755.200" font-size="11" fill="#333" textLength="81.600" lengthAdjust="spacing">ADD FILTERS (1)</text>
<rect x="1678.500" y="740.500" width="209" height="23" rx="3" fill="#fff" stroke="#ddd"/>
<g fill="none" stroke="#999" stroke-width="1.300"><circle cx="1688" cy="751.500" r="3.600"/><path d="M1690.700 754.200l3 3"/></g>
<rect x="231" y="771.500" width="1673" height="29" fill="#f0f0f0"/>
<rect x="231" y="800.500" width="1673" height="53" fill="#f8f8f8"/>
<rect x="231" y="853.500" width="1673" height="31" fill="#f5f5f5"/>
<rect x="1357.500" y="884.500" width="172" height="111" fill="#fafafa"/>
<path d="M231 771.5H1904" stroke="#ddd" stroke-width="1"/>
<path d="M231 800.5H1904" stroke="#ddd" stroke-width="1"/>
<path d="M231 853.5H1904" stroke="#ddd" stroke-width="1"/>
<path d="M231 884.5H1904" stroke="#ddd" stroke-width="1"/>
<path d="M231 914.5H1904" stroke="#ddd" stroke-width="1"/>
<path d="M231 945.5H1904" stroke="#ddd" stroke-width="1"/>
<path d="M231 975.5H1904" stroke="#ddd" stroke-width="1"/>
<path d="M395.5 771.500V995" stroke="#ddd" stroke-width="1"/>
<path d="M601.5 771.500V995" stroke="#ddd" stroke-width="1"/>
<path d="M770.5 771.500V995" stroke="#ddd" stroke-width="1"/>
<path d="M955.5 771.500V995" stroke="#ddd" stroke-width="1"/>
<path d="M1140.5 771.500V995" stroke="#ddd" stroke-width="1"/>
<path d="M1357.5 771.500V995" stroke="#ddd" stroke-width="1"/>
<path d="M1529.5 771.500V995" stroke="#ddd" stroke-width="1"/>
<path d="M1720.5 771.500V995" stroke="#ddd" stroke-width="1"/>
<text x="238.3" y="789.600" font-size="10" font-weight="bold" fill="#222" letter-spacing="0.140" id="th0">Content Age (Weeks)</text>
<path d="M382.5 784.100l2.700-2.700 2.700 2.700M382.5 788.300l2.700 2.700 2.700-2.700" fill="none" stroke="#666" stroke-width="1.100"/>
<text x="402.8" y="789.600" font-size="10" font-weight="bold" fill="#222" letter-spacing="0.140" id="th1">Pageviews</text>
<path d="M588.5 784.100l2.700-2.700 2.700 2.700M588.5 788.300l2.700 2.700 2.700-2.700" fill="none" stroke="#666" stroke-width="1.100"/>
<text x="608.8" y="789.600" font-size="10" font-weight="bold" fill="#222" letter-spacing="0.140" id="th2">Average Page Engaged Time</text>
<path d="M757.5 784.100l2.700-2.700 2.700 2.700M757.5 788.300l2.700 2.700 2.700-2.700" fill="none" stroke="#666" stroke-width="1.100"/>
<text x="777.8" y="789.600" font-size="10" font-weight="bold" fill="#222" letter-spacing="0.140" id="th3">Page Engagement Rate</text>
<path d="M942.5 784.100l2.700-2.700 2.700 2.700M942.5 788.300l2.700 2.700 2.700-2.700" fill="none" stroke="#666" stroke-width="1.100"/>
<text x="962.8" y="789.600" font-size="10" font-weight="bold" fill="#222" letter-spacing="0.140" id="th4">Bounce Rate</text>
<path d="M1127.5 784.100l2.700-2.700 2.700 2.700M1127.5 788.300l2.700 2.700 2.700-2.700" fill="none" stroke="#666" stroke-width="1.100"/>
<text x="1147.8" y="789.600" font-size="10" font-weight="bold" fill="#222" letter-spacing="0.140" id="th5">Revenue</text>
<path d="M1344.5 784.100l2.700-2.700 2.700 2.700M1344.5 788.300l2.700 2.700 2.700-2.700" fill="none" stroke="#666" stroke-width="1.100"/>
<text x="1364.8" y="789.600" font-size="10" font-weight="bold" fill="#222" letter-spacing="0.140" id="th6">Page RPM</text>
<path d="M1516.2 784.300l3 3 3-3" fill="none" stroke="#333" stroke-width="1.400"/>
<text x="1536.8" y="789.600" font-size="10" font-weight="bold" fill="#222" letter-spacing="0.140" id="th7">Number Of Pages</text>
<path d="M1707.5 784.100l2.700-2.700 2.700 2.700M1707.5 788.300l2.700 2.700 2.700-2.700" fill="none" stroke="#666" stroke-width="1.100"/>
<text x="1727.8" y="789.600" font-size="10" font-weight="bold" fill="#222" letter-spacing="0.140" id="th8">% Exit</text>
<path d="M1891.0 784.100l2.700-2.700 2.700 2.700M1891.0 788.300l2.700 2.700 2.700-2.700" fill="none" stroke="#666" stroke-width="1.100"/>
<text x="594.5" y="826" font-size="16" fill="#222" text-anchor="end" class="bg">2,831,078</text>
<text x="595.3" y="840.300" font-size="10" fill="#909090" text-anchor="end" letter-spacing="0.200" class="sb2">% of Total: 100.00% (2,831,078)</text>
<text x="763.5" y="826" font-size="16" fill="#222" text-anchor="end" class="bg">00:38</text>
<text x="764.3" y="840.300" font-size="10" fill="#909090" text-anchor="end" letter-spacing="0.200" class="sb2">Avg for View: 00:38 (0.00%)</text>
<text x="948.5" y="826" font-size="16" fill="#222" text-anchor="end" class="bg">50.64%</text>
<text x="949.3" y="840.300" font-size="10" fill="#909090" text-anchor="end" letter-spacing="0.200" class="sb2">Avg for View: 50.64% (0.00%)</text>
<text x="1133.5" y="826" font-size="16" fill="#222" text-anchor="end" class="bg">28.38%</text>
<text x="1134.3" y="840.300" font-size="10" fill="#909090" text-anchor="end" letter-spacing="0.200" class="sb2">Avg for View: 28.38% (0.00%)</text>
<text x="1350.5" y="826" font-size="16" fill="#222" text-anchor="end" class="bg">$15,091.18</text>
<text x="1351.3" y="840.300" font-size="10" fill="#909090" text-anchor="end" letter-spacing="0.200" class="sb2">% of Total: 100.00% ($15,091.18)</text>
<text x="1522.5" y="826" font-size="16" fill="#222" text-anchor="end" class="bg">$5.33</text>
<text x="1523.3" y="840.300" font-size="10" fill="#909090" text-anchor="end" letter-spacing="0.200" class="sb2">Avg for View: $5.33 (0.00%)</text>
<text x="1713.5" y="826" font-size="16" fill="#222" text-anchor="end" class="bg">438,717</text>
<text x="1714.3" y="840.300" font-size="10" fill="#909090" text-anchor="end" letter-spacing="0.200" class="sb2">% of Total: 100.00% (438,717)</text>
<text x="1897.0" y="826" font-size="16" fill="#222" text-anchor="end" class="bg">84.49%</text>
<text x="1897.8" y="840.300" font-size="10" fill="#909090" text-anchor="end" letter-spacing="0.200" class="sb2">Avg for View: 84.49% (0.00%)</text>
<g fill="#43a047"><rect x="239.500" y="864.0" width="8.600" height="1.900"/><path d="M240.200 866.5h7.200v5.900h-7.200z M242.200 867.7h3.200v1.300h-3.200z" fill-rule="evenodd"/></g>
<g fill="none" stroke="#43a047" stroke-width="1.100"><circle cx="258.900" cy="868.5" r="4.300"/><path d="M258.900 865.9v2.900l2 1.200" stroke-width="1"/></g>
<text x="268.600" y="873.1" font-size="11" fill="#222" letter-spacing="-0.350">171</text>
<text x="594.8" y="873.1" font-size="10" fill="#888" text-anchor="end" letter-spacing="0.100">(0.19%)</text>
<text x="554.2" y="873.1" font-size="11" fill="#222" text-anchor="end" letter-spacing="-0.350">5,371</text>
<text x="763.5" y="873.1" font-size="11" fill="#222" text-anchor="end" letter-spacing="-0.120">01:01</text>
<text x="948.5" y="873.1" font-size="11" fill="#222" text-anchor="end" letter-spacing="-0.120">72.04%</text>
<text x="1133.5" y="873.1" font-size="11" fill="#222" text-anchor="end" letter-spacing="-0.120">22.72%</text>
<text x="1350.8" y="873.1" font-size="10" fill="#888" text-anchor="end" letter-spacing="0.100">(0.35%)</text>
<text x="1310.2" y="873.1" font-size="11" fill="#222" text-anchor="end" letter-spacing="-0.350">$52.32</text>
<text x="1522.5" y="873.1" font-size="11" fill="#222" text-anchor="end" letter-spacing="-0.120" font-weight="bold">$9.74</text>
<text x="1713.8" y="873.1" font-size="10" fill="#888" text-anchor="end" letter-spacing="0.100">(0.09%)</text>
<text x="1673.2" y="873.1" font-size="11" fill="#222" text-anchor="end" letter-spacing="-0.350">382</text>
<text x="1897.0" y="873.1" font-size="11" fill="#222" text-anchor="end" letter-spacing="-0.120">88.05%</text>
<g fill="#43a047"><rect x="239.500" y="895.0" width="8.600" height="1.900"/><path d="M240.200 897.5h7.200v5.900h-7.200z M242.200 898.7h3.200v1.300h-3.200z" fill-rule="evenodd"/></g>
<g fill="none" stroke="#43a047" stroke-width="1.100"><circle cx="258.900" cy="899.5" r="4.300"/><path d="M258.900 896.9v2.900l2 1.200" stroke-width="1"/></g>
<text x="268.600" y="904.1" font-size="11" fill="#222" letter-spacing="-0.350">173</text>
<text x="594.8" y="904.1" font-size="10" fill="#888" text-anchor="end" letter-spacing="0.100">(0.07%)</text>
<text x="554.2" y="904.1" font-size="11" fill="#222" text-anchor="end" letter-spacing="-0.350">1,907</text>
<text x="763.5" y="904.1" font-size="11" fill="#222" text-anchor="end" letter-spacing="-0.120">01:02</text>
<text x="948.5" y="904.1" font-size="11" fill="#222" text-anchor="end" letter-spacing="-0.120">71.42%</text>
<text x="1133.5" y="904.1" font-size="11" fill="#222" text-anchor="end" letter-spacing="-0.120">22.42%</text>
<text x="1350.8" y="904.1" font-size="10" fill="#888" text-anchor="end" letter-spacing="0.100">(0.12%)</text>
<text x="1310.2" y="904.1" font-size="11" fill="#222" text-anchor="end" letter-spacing="-0.350">$18.17</text>
<text x="1522.5" y="904.1" font-size="11" fill="#222" text-anchor="end" letter-spacing="-0.120" font-weight="bold">$9.53</text>
<text x="1713.8" y="904.1" font-size="10" fill="#888" text-anchor="end" letter-spacing="0.100">(0.04%)</text>
<text x="1673.2" y="904.1" font-size="11" fill="#222" text-anchor="end" letter-spacing="-0.350">168</text>
<text x="1897.0" y="904.1" font-size="11" fill="#222" text-anchor="end" letter-spacing="-0.120">88.15%</text>
<g fill="#43a047"><rect x="239.500" y="925.0" width="8.600" height="1.900"/><path d="M240.200 927.5h7.200v5.900h-7.200z M242.200 928.7h3.200v1.300h-3.200z" fill-rule="evenodd"/></g>
<g fill="none" stroke="#43a047" stroke-width="1.100"><circle cx="258.900" cy="929.5" r="4.300"/><path d="M258.900 926.9v2.900l2 1.200" stroke-width="1"/></g>
<text x="268.600" y="934.1" font-size="11" fill="#222" letter-spacing="-0.350">168</text>
<text x="594.8" y="934.1" font-size="10" fill="#888" text-anchor="end" letter-spacing="0.100">(0.43%)</text>
<text x="554.2" y="934.1" font-size="11" fill="#222" text-anchor="end" letter-spacing="-0.350">12,266</text>
<text x="763.5" y="934.1" font-size="11" fill="#222" text-anchor="end" letter-spacing="-0.120">00:59</text>
<text x="948.5" y="934.1" font-size="11" fill="#222" text-anchor="end" letter-spacing="-0.120">70.88%</text>
<text x="1133.5" y="934.1" font-size="11" fill="#222" text-anchor="end" letter-spacing="-0.120">23.77%</text>
<text x="1350.8" y="934.1" font-size="10" fill="#888" text-anchor="end" letter-spacing="0.100">(0.76%)</text>
<text x="1310.2" y="934.1" font-size="11" fill="#222" text-anchor="end" letter-spacing="-0.350">$115.09</text>
<text x="1522.5" y="934.1" font-size="11" fill="#222" text-anchor="end" letter-spacing="-0.120" font-weight="bold">$9.38</text>
<text x="1713.8" y="934.1" font-size="10" fill="#888" text-anchor="end" letter-spacing="0.100">(0.15%)</text>
<text x="1673.2" y="934.1" font-size="11" fill="#222" text-anchor="end" letter-spacing="-0.350">679</text>
<text x="1897.0" y="934.1" font-size="11" fill="#222" text-anchor="end" letter-spacing="-0.120">88.14%</text>
<g fill="#43a047"><rect x="239.500" y="956.0" width="8.600" height="1.900"/><path d="M240.200 958.5h7.200v5.900h-7.200z M242.200 959.7h3.200v1.300h-3.200z" fill-rule="evenodd"/></g>
<g fill="none" stroke="#43a047" stroke-width="1.100"><circle cx="258.900" cy="960.5" r="4.300"/><path d="M258.900 957.9v2.900l2 1.200" stroke-width="1"/></g>
<text x="268.600" y="965.1" font-size="11" fill="#222" letter-spacing="-0.350">169</text>
<text x="594.8" y="965.1" font-size="10" fill="#888" text-anchor="end" letter-spacing="0.100">(0.39%)</text>
<text x="554.2" y="965.1" font-size="11" fill="#222" text-anchor="end" letter-spacing="-0.350">11,147</text>
<text x="763.5" y="965.1" font-size="11" fill="#222" text-anchor="end" letter-spacing="-0.120">00:59</text>
<text x="948.5" y="965.1" font-size="11" fill="#222" text-anchor="end" letter-spacing="-0.120">70.84%</text>
<text x="1133.5" y="965.1" font-size="11" fill="#222" text-anchor="end" letter-spacing="-0.120">23.73%</text>
<text x="1350.8" y="965.1" font-size="10" fill="#888" text-anchor="end" letter-spacing="0.100">(0.68%)</text>
<text x="1310.2" y="965.1" font-size="11" fill="#222" text-anchor="end" letter-spacing="-0.350">$102.03</text>
<text x="1522.5" y="965.1" font-size="11" fill="#222" text-anchor="end" letter-spacing="-0.120" font-weight="bold">$9.15</text>
<text x="1713.8" y="965.1" font-size="10" fill="#888" text-anchor="end" letter-spacing="0.100">(0.15%)</text>
<text x="1673.2" y="965.1" font-size="11" fill="#222" text-anchor="end" letter-spacing="-0.350">648</text>
<text x="1897.0" y="965.1" font-size="11" fill="#222" text-anchor="end" letter-spacing="-0.120">88.50%</text>
<g fill="#43a047"><rect x="239.500" y="986.0" width="8.600" height="1.900"/><path d="M240.200 988.5h7.200v5.900h-7.200z M242.200 989.7h3.200v1.300h-3.200z" fill-rule="evenodd"/></g>
<g fill="none" stroke="#43a047" stroke-width="1.100"><circle cx="258.900" cy="990.5" r="4.300"/><path d="M258.900 987.9v2.900l2 1.200" stroke-width="1"/></g>
<text x="268.600" y="995.1" font-size="11" fill="#222" letter-spacing="-0.350">172</text>
<text x="594.8" y="995.1" font-size="10" fill="#888" text-anchor="end" letter-spacing="0.100">(0.09%)</text>
<text x="554.2" y="995.1" font-size="11" fill="#222" text-anchor="end" letter-spacing="-0.350">2,553</text>
<text x="763.5" y="995.1" font-size="11" fill="#222" text-anchor="end" letter-spacing="-0.120">00:56</text>
<text x="948.5" y="995.1" font-size="11" fill="#222" text-anchor="end" letter-spacing="-0.120">68.12%</text>
<text x="1133.5" y="995.1" font-size="11" fill="#222" text-anchor="end" letter-spacing="-0.120">25.76%</text>
<text x="1350.8" y="995.1" font-size="10" fill="#888" text-anchor="end" letter-spacing="0.100">(0.15%)</text>
<text x="1310.2" y="995.1" font-size="11" fill="#222" text-anchor="end" letter-spacing="-0.350">$23.16</text>
<text x="1522.5" y="995.1" font-size="11" fill="#222" text-anchor="end" letter-spacing="-0.120" font-weight="bold">$9.07</text>
<text x="1713.8" y="995.1" font-size="10" fill="#888" text-anchor="end" letter-spacing="0.100">(0.05%)</text>
<text x="1673.2" y="995.1" font-size="11" fill="#222" text-anchor="end" letter-spacing="-0.350">237</text>
<text x="1897.0" y="995.1" font-size="11" fill="#222" text-anchor="end" letter-spacing="-0.120">89.03%</text>
</svg></div><!--TABLE_END-->
<div id="sideshadow"></div>
<div class="abs" style="left:1915px;top:61px;width:3.500px;height:727px;background:rgba(150,150,150,.5);border-radius:2px"></div>
<div class="abs" style="left:0;top:992.400px;width:1920px;height:3px;background:#595959"></div>
<div class="abs" style="left:112.500px;top:992.400px;width:31.500px;height:3px;background:#777"></div>
<svg class="abs" style="left:1435px;top:871px" width="14" height="21" viewBox="0 0 14 21"><path d="M1.500 1.500V17L5.300 13.500 7.800 19.300 10.300 18.200 7.800 12.600H12.800Z" fill="#fff" stroke="#1a1a2a" stroke-width="1.100" stroke-linejoin="round"/></svg>

</body>
</html>
